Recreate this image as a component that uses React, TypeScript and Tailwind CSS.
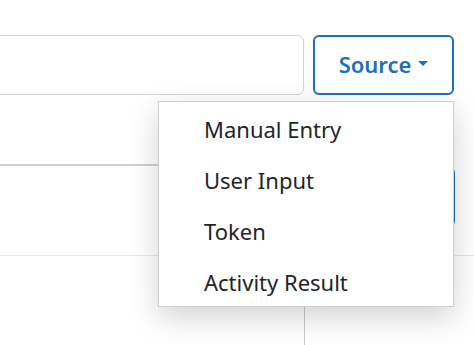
import React from 'react'

const items = ['Manual Entry', 'User Input', 'Token', 'Activity Result']

export default function App() {
  return (
    <div
      className="relative w-[474px] h-[345px] overflow-hidden bg-white"
      style={{ fontFamily: '"Noto Sans", "Open Sans", sans-serif' }}
    >
      {/* top row: input + source button */}
      <div className="flex gap-[9px] pt-[35px] pl-0 pr-[20px]">
        <div className="flex-1 -ml-[10px] h-[60px] rounded-[6px] border border-[#cfd4d9] bg-white" />
        <button className="w-[141px] h-[60px] rounded-[6px] border-2 border-[#1c6fc2] text-[#1c6fc2] flex items-center justify-center gap-[7px] text-[22px] font-semibold">
          <span className="-mt-[2px]">Source</span>
          <svg width="10" height="5" viewBox="0 0 10 5" className="-mt-[4px]">
            <path d="M0 0h10L5 5z" fill="#1c6fc2" />
          </svg>
        </button>
      </div>

      {/* form rows behind the menu */}
      <div className="h-[71px] border-b-2 border-[#d0d0d0] w-[440px]" />
      <div className="h-[90px] flex justify-end items-start pt-[1px] pr-[19px] border-b border-[#e8e8e8] w-[474px]">
        <div className="w-[120px] h-[60px] rounded-[6px] border-2 border-[#1c6fc2]" />
      </div>
      <div className="grid grid-cols-[305px_1fr] h-[100px]">
        <div className="border-r border-[#c8c8c8]" />
        <div />
      </div>

      {/* dropdown menu */}
      <div className="absolute left-[158px] top-[101px] w-[296px] bg-white border border-[#cfcfcf] shadow-[0_10px_28px_rgba(0,0,0,0.18)]">
        {items.map((label) => (
          <div
            key={label}
            className="h-[51px] flex items-center pl-[45px] pt-[3px] text-[22px] text-[#212529]"
          >
            {label}
          </div>
        ))}
      </div>
    </div>
  )
}
